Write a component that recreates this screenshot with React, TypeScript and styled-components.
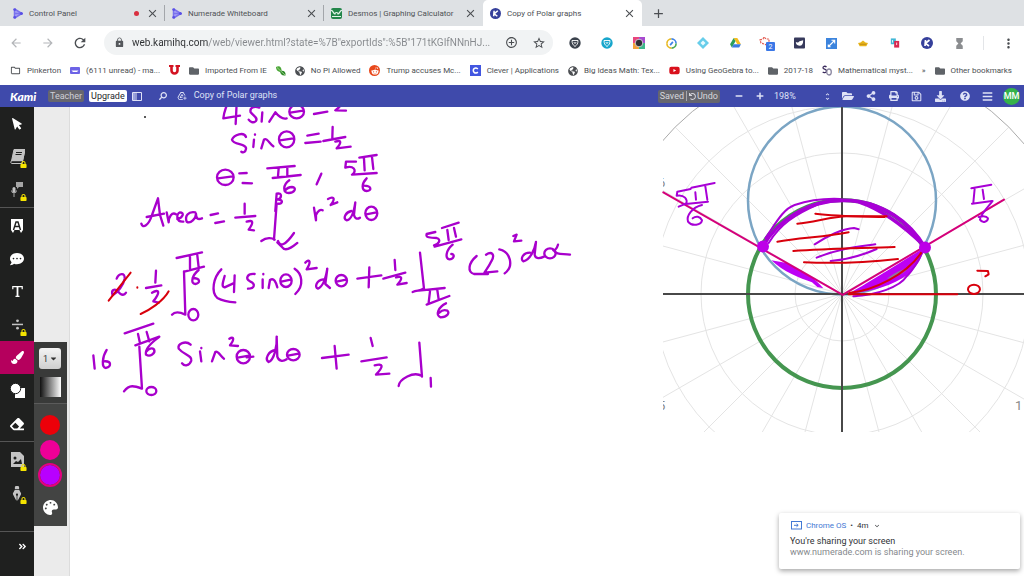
import React from 'react';
import styled, { createGlobalStyle, css } from 'styled-components';
import {
  FaFolder, FaFolderOpen, FaShareAlt, FaPrint, FaRegSave, FaDownload, FaQuestionCircle, FaBars,
  FaMinus, FaPlus, FaUndo, FaSearch, FaGlobeAmericas, FaRedditAlien, FaPaintBrush, FaEraser,
  FaMousePointer, FaCommentDots, FaLock, FaPalette, FaPenNib, FaAngleDoubleRight,
  FaCaretDown, FaYoutube,
} from 'react-icons/fa';
import {
  MdClose, MdAdd, MdArrowBack, MdArrowForward, MdRefresh, MdLock, MdAddCircleOutline, MdStarBorder,
  MdMoreVert, MdHourglassFull, MdOutlineFolder, MdExpandMore, MdAddToDrive, MdUnfoldMore,
} from 'react-icons/md';

const GlobalStyle = createGlobalStyle`
  *, *::before, *::after { box-sizing: border-box; }
  body { margin: 0; background: #fff; font-family: Roboto, "Liberation Sans", sans-serif; }
  button, input, select { font: inherit; color: inherit; margin: 0; padding: 0; border: 0; background: none; }
  a { color: inherit; text-decoration: none; }
  svg { display: block; flex: none; }
`;

const INK = '#a800cc';
const RED = '#d8000c';

const Screen = styled.div`
  display: flex;
  flex-direction: column;
  height: 100vh;
  overflow: hidden;
  position: relative;
`;

/* ---------- browser tabs ---------- */
const TabStrip = styled.nav`
  display: flex;
  flex: none;
  align-items: stretch;
  height: 26px;
  padding-left: 6px;
  background: #dee1e4;
`;
const Tab = styled.div<{ $active?: boolean; $divider?: boolean }>`
  display: flex;
  align-items: center;
  flex: 0 1 159px;
  min-width: 0;
  gap: 6px;
  padding: 0 6px 0 7px;
  font-size: 8px;
  color: #4e5155;
  background: linear-gradient(#a3a6aa, #a3a6aa) right center / ${p => (p.$divider ? 1 : 0)}px 16px no-repeat;
  ${p => p.$active && css`
    background: #fff;
    border-radius: 5px 5px 0 0;
  `}
`;
const TabTitle = styled.a`
  flex: 1;
  min-width: 0;
  white-space: nowrap;
`;
const TabDot = styled.span`
  width: 5px;
  height: 5px;
  border-radius: 50%;
  background: #d93040;
`;
const IconButton = styled.button<{ $w?: number; $dim?: boolean }>`
  display: flex;
  align-items: center;
  justify-content: center;
  flex: none;
  width: ${p => p.$w ?? 14}px;
  color: ${p => (p.$dim ? '#b4b6b9' : '#4b4e52')};
`;

/* ---------- address bar ---------- */
const AddressRow = styled.div`
  display: flex;
  flex: none;
  height: 34px;
  background: #fff;
`;
const Omnibox = styled.div`
  display: flex;
  flex: 1;
  align-items: center;
  height: 25px;
  margin: 4px 6px 5px 8px;
  padding: 0 3px 0 10px;
  gap: 7px;
  border-radius: 13px;
  background: #f1f3f4;
  color: #55585c;
`;
const UrlInput = styled.input`
  flex: 1;
  min-width: 0;
  margin-right: -7px;
  font-size: 10px;
  outline: none;
  color: transparent;
  background: linear-gradient(to right, #2b2d30 76px, #85888c 76px);
  background-clip: text;
  -webkit-background-clip: text;
`;
const ToolbarDivider = styled.span`
  width: 1px;
  height: 14px;
  margin: 10px 8px;
  background: #e3e5e8;
`;

/* ---------- bookmarks ---------- */
const BookmarkBar = styled.nav`
  display: flex;
  flex: none;
  align-items: center;
  height: 25px;
  padding: 0 16px 4px 10px;
  gap: 9px;
  background: #fff;
`;
const Bookmark = styled.a<{ $end?: boolean }>`
  display: flex;
  align-items: center;
  gap: 6px;
  font-size: 8px;
  line-height: 12px;
  white-space: nowrap;
  color: #4c4f53;
  margin-left: ${p => (p.$end ? 'auto' : '0')};
`;

/* ---------- kami header ---------- */
const AppBar = styled.header`
  display: flex;
  flex: none;
  align-items: center;
  height: 22px;
  padding: 0 4px 0 10px;
  background: #3f4aab;
  color: #dfe2f6;
  font-size: 9px;
`;
const Logo = styled.span`
  width: 38px;
  font-family: Lato, sans-serif;
  font-size: 12px;
  font-style: italic;
  font-weight: 900;
  color: #fff;
`;
const Badge = styled.button<{ $light?: boolean }>`
  height: 12px;
  margin-right: 5px;
  padding: 0 2px;
  border-radius: 2px;
  font-size: 9px;
  line-height: 12px;
  background: ${p => (p.$light ? '#fff' : '#66666e')};
  color: ${p => (p.$light ? '#26282c' : '#cfcfd6')};
`;
const BarButton = styled.button<{ $w: number; $gap?: number }>`
  display: flex;
  align-items: center;
  justify-content: center;
  flex: none;
  width: ${p => p.$w}px;
  height: 22px;
  margin-left: ${p => p.$gap ?? 0}px;
`;
const DocTitle = styled.h1`
  flex: 1;
  margin: 0 0 0 6px;
  font-size: 9px;
  font-weight: 400;
  line-height: 12px;
  padding-bottom: 2px;
  white-space: nowrap;
`;
const SaveState = styled.div`
  display: flex;
  align-items: center;
  gap: 2px;
  height: 13px;
  padding: 0 2px;
  margin-right: 9px;
  border-radius: 2px;
  background: #66666e;
  color: #d6d6dc;
`;
const UndoButton = styled.button`
  display: flex;
  align-items: center;
  gap: 1px;
  padding-left: 2px;
  border-left: 1px solid #a8a8ae;
  line-height: 10px;
`;
const ZoomBox = styled.label`
  display: grid;
  align-items: center;
  width: 62px;
  margin-right: 4px;
  > * { grid-area: 1 / 1; }
  svg { justify-self: end; pointer-events: none; }
`;
const PlainSelect = styled.select`
  appearance: none;
  width: 100%;
  padding-left: 4px;
  font-size: 9px;
  outline: none;
`;
const Avatar = styled.button`
  width: 17px;
  height: 17px;
  margin-left: 4px;
  border-radius: 50%;
  background: #35b24a;
  color: #fff;
  font-size: 9px;
  font-weight: 500;
  line-height: 17px;
`;

/* ---------- workspace ---------- */
const Workspace = styled.div`
  display: flex;
  flex: 1;
  min-height: 0;
`;
const ToolRail = styled.nav`
  display: flex;
  flex: none;
  flex-direction: column;
  width: 34px;
  background: #1f201f;
`;
const ToolGroup = styled.div<{ $last?: boolean }>`
  display: flex;
  flex-direction: column;
  padding-bottom: ${p => (p.$last ? 22 : 1)}px;
  margin-bottom: 1px;
  border-bottom: 1px solid #555;
`;
const Tool = styled.button<{ $active?: boolean; $muted?: boolean }>`
  display: grid;
  place-items: center;
  width: 100%;
  height: 33px;
  color: ${p => (p.$muted ? '#c3c3c3' : '#fff')};
  background: ${p => (p.$active ? '#b5005d' : 'transparent')};
  > * { grid-area: 1 / 1; }
`;
const ToolMore = styled(Tool)`
  height: 26px;
  padding-left: 10px;
`;
const Lock = styled(FaLock)`
  color: #f5e400;
  margin: 16px 0 0 12px;
`;
const Gutter = styled.aside`
  display: flex;
  flex: none;
  flex-direction: column;
  align-items: flex-start;
  width: 36px;
  padding-top: 235px;
  background: #ebebeb;
  border-right: 1px solid #dcdcdc;
`;
const OptionPanel = styled.div`
  display: flex;
  flex-direction: column;
  width: 33px;
  background: #434443;
`;
const PanelPart = styled.div<{ $top?: boolean }>`
  display: flex;
  flex-direction: column;
  align-items: center;
  gap: ${p => (p.$top ? 8 : 1)}px;
  padding: ${p => (p.$top ? '6px 1px 6px 0' : '9px 1px 11px 0')};
  background: ${p => (p.$top ? '#393a39' : 'transparent')};
  border-bottom: ${p => (p.$top ? '1px solid #5b5b5b' : '0')};
`;
const SizeBox = styled.label`
  display: grid;
  align-items: center;
  width: 22px;
  height: 21px;
  border-radius: 3px;
  background: linear-gradient(#f4f4f4, #cfcfcf);
  color: #333;
  > * { grid-area: 1 / 1; }
  svg { justify-self: end; margin-right: 3px; pointer-events: none; }
`;
const OpacityButton = styled.button`
  width: 21px;
  height: 20px;
  background: linear-gradient(to right, #111, #fff);
`;
const Swatch = styled.input<{ $color: string }>`
  appearance: none;
  width: 24px;
  height: 24px;
  border: 2px solid transparent;
  border-radius: 50%;
  background: ${p => p.$color} padding-box;
  &:checked { border-color: #e5007e; }
`;
const PaletteButton = styled.button`
  margin-top: 12px;
  color: #fff;
`;
const PaperArea = styled.main`
  flex: 1;
  min-width: 0;
  overflow: hidden;
  background: #fff;
  > svg { width: 100%; height: auto; }
`;

/* ---------- notification ---------- */
const Toast = styled.section`
  position: absolute;
  right: 4px;
  bottom: 7px;
  width: 241px;
  padding: 7px 11px 11px;
  border-radius: 2px;
  background: #fff;
  box-shadow: 0 2px 5px rgba(0, 0, 0, 0.35);
  font-size: 9px;
  line-height: 11px;
  color: #303236;
`;
const ToastHead = styled.div`
  display: flex;
  align-items: center;
  gap: 4px;
  margin: 0 0 5px 1px;
  font-size: 8px;
`;
const ToastSource = styled.span`
  color: #4479d4;
`;
const ToastText = styled.p<{ $soft?: boolean }>`
  margin: 0;
  color: ${p => (p.$soft ? '#85888c' : '#303236')};
`;

/* ---------- small drawings ---------- */
const NumeradeIcon = () => (
  <svg width="10" height="11" viewBox="0 0 10 11">
    <path d="M1.5 1v9M1.5 1l7.5 4.5L1.5 10M1.5 5.5H9" stroke="#7a72ec" strokeWidth="1.5" fill="#a9a4f4" />
    <circle cx="1.7" cy="1.6" r="1.4" fill="#5a50e6" /><circle cx="1.7" cy="9.4" r="1.4" fill="#5a50e6" /><circle cx="8.4" cy="5.5" r="1.5" fill="#5a50e6" />
  </svg>
);
const DesmosIcon = () => (
  <svg width="11" height="11" viewBox="0 0 11 11">
    <rect width="11" height="11" rx="2" fill="#23864a" />
    <path d="M0 2.500C2 2 2.500 6 4 6c0-2 3-2 3 0C8.500 6 9 2 11 2.500M1 8.500h9" stroke="#e4f5e9" strokeWidth="1.200" fill="none" />
  </svg>
);
const KamiIcon = ({ size = 11 }: { size?: number }) => (
  <svg width={size} height={size} viewBox="0 0 12 12">
    <circle cx="6" cy="6" r="6" fill="#36409b" />
    <path d="M4.500 3L4 9M8.500 3L4.500 6.300 8 9" stroke="#fff" strokeWidth="1.700" fill="none" />
  </svg>
);
const ShieldIcon = ({ color }: { color: string }) => (
  <svg width="12" height="12" viewBox="0 0 12 12">
    <circle cx="6" cy="6" r="5.700" fill={color} />
    <path d="M3 3.500h6c0 3-1 4.500-3 6-2-1.500-3-3-3-6z" fill="none" stroke="#fff" strokeWidth=".9" />
    <path d="M4.800 5L6 6.600 7.200 5" fill="none" stroke="#fff" strokeWidth=".9" />
  </svg>
);
const CameraIcon = () => (
  <svg width="12" height="12" viewBox="0 0 12 12">
    <rect width="6" height="6" fill="#e8457c" /><rect x="6" width="6" height="6" fill="#a84ad0" />
    <rect y="6" width="6" height="6" fill="#f2a23a" /><rect x="6" y="6" width="6" height="6" fill="#3db889" />
    <circle cx="6" cy="6" r="3.800" fill="#2e3034" stroke="#e9e4ee" strokeWidth=".8" />
  </svg>
);
const RingIcon = () => (
  <svg width="11" height="11" viewBox="0 0 12 12" fill="none" strokeWidth="1.800">
    <path d="M1 6a5 5 0 0 1 5-5" stroke="#e8b922" /><path d="M6 1a5 5 0 0 1 5 5" stroke="#3d82e8" />
    <path d="M11 6a5 5 0 0 1-5 5" stroke="#49a857" /><path d="M6 11a5 5 0 0 1-5-5" stroke="#e8b922" />
    <path d="M4.500 7.800l3-3.600" stroke="#3d82e8" />
  </svg>
);
const DiamondIcon = () => (
  <svg width="12" height="12" viewBox="0 0 12 12">
    <path d="M6 0l6 6-6 6-6-6z" fill="#67cdea" /><path d="M6 3.500L8.500 6 6 8.500 3.500 6z" fill="#e8fbff" />
  </svg>
);
const DriveIcon = () => (
  <svg width="11" height="10" viewBox="0 0 12 11">
    <path d="M4 0h4l4 7H8z" fill="#f5bd20" /><path d="M4 0L0 7l2 3.500 4-7z" fill="#2b9f5b" /><path d="M4 7h8l-2 3.500H2z" fill="#3b7be0" />
  </svg>
);
const PuzzleIcon = () => (
  <svg width="16" height="15" viewBox="0 0 16 15">
    <path d="M1 4l3-1 1-2 2 2h3v3l-2 3-3-1-3-1z" fill="none" stroke="#e2574c" strokeWidth="1.200" strokeDasharray="2 1" />
    <rect x="7" y="6" width="9" height="9" rx="1" fill="#3b78e7" />
    <text x="11.500" y="13" fontSize="7" fill="#fff" textAnchor="middle">2</text>
  </svg>
);
const NightIcon = () => (
  <svg width="11" height="12" viewBox="0 0 12 12">
    <rect width="12" height="12" rx="1" fill="#373a5c" />
    <path d="M2 5c2 1 3 0 4-1l4-1c0 4-1 6-4 6S2 7 2 5z" fill="#fff" />
  </svg>
);
const ExpandIcon = () => (
  <svg width="11" height="11" viewBox="0 0 12 12">
    <rect width="12" height="12" fill="#3c84dd" />
    <path d="M3 9l6-6M6 2.500h3.500V6M2.500 7v2.500H5" stroke="#fff" strokeWidth="1.200" fill="none" />
  </svg>
);
const CrownIcon = () => (
  <svg width="10" height="10" viewBox="0 0 12 12">
    <path d="M0 6l3-.5L6 3l3 2.500 3 .5-2 4H2z" fill="#e8b51c" /><path d="M2 7.500h8" stroke="#b88312" />
  </svg>
);
const CardsIcon = () => (
  <svg width="10" height="12" viewBox="0 0 12 13">
    <rect x="1" y="1" width="6" height="7" fill="#42b7d6" /><rect x="5" y="4" width="6" height="8" fill="#d9284f" />
    <path d="M3 3v3M8 6v3" stroke="#fff" />
  </svg>
);
const MailIcon = () => (
  <svg width="10" height="8" viewBox="0 0 10 8">
    <rect width="10" height="7" rx="1" fill="#6d63e6" /><path d="M1.500 3.500h7L7 5H3z" fill="#fff" />
  </svg>
);
const MagnetIcon = () => (
  <svg width="11" height="11" viewBox="0 0 11 11">
    <path d="M2.500 0v5.500a3 3 0 0 0 6 0V0M0 .8h4.500M6.500 .8H11" stroke="#d31322" strokeWidth="2.600" fill="none" />
  </svg>
);
const LeafIcon = () => (
  <svg width="10" height="10" viewBox="0 0 10 10">
    <path d="M0 1c4-2 6 1 5.500 5C2 6 0 4 0 1z" fill="#4aa637" /><path d="M4 5c4-1 6 1 5.500 4.500C6 10 4 8 4 5z" fill="#2f8a2a" />
    <path d="M1 1.500L9 9" stroke="#bfe3a9" strokeWidth=".7" />
  </svg>
);
const CleverIcon = () => (
  <svg width="11" height="11" viewBox="0 0 11 11">
    <rect width="11" height="11" fill="#4256e0" />
    <path d="M7.800 4A2.500 2.500 0 1 0 7.800 7" stroke="#fff" strokeWidth="1.500" fill="none" />
  </svg>
);
const RedditIcon = styled.span`
  display: grid;
  place-items: center;
  width: 11px;
  height: 11px;
  border-radius: 50%;
  background: #e8481c;
  color: #fff;
`;
const LoopsIcon = () => (
  <svg width="10" height="11" viewBox="0 0 10 11" fill="none" strokeWidth="1.300">
    <path d="M4.500 2C3 .5 .8 1.500 1 3s3.500 1 3.500 3S1.500 8 .8 6.800" stroke="#3a2a5c" />
    <ellipse cx="7" cy="7" rx="2.300" ry="3" stroke="#8a86a0" />
  </svg>
);
const SplitIcon = () => (
  <svg width="10" height="9" viewBox="0 0 10 9">
    <path d="M.5 .5h9v8h-9zM4 .5v8" stroke="#dfe2f6" fill="none" /><path d="M1 1h2v7H1z" fill="#9aa2de" />
  </svg>
);
const CastIcon = () => (
  <svg width="11" height="9" viewBox="0 0 11 9" fill="none" stroke="#4479d4">
    <rect x=".5" y=".5" width="10" height="7.500" /><path d="M3 4.300h4M5.500 2.800L7.200 4.300 5.500 5.800" />
  </svg>
);
const BookIcon = () => (
  <svg width="15" height="15" viewBox="0 0 15 15">
    <path d="M4 .5h11L12.500 12H1.500z" fill="#c3c3c3" stroke="#c3c3c3" strokeLinejoin="round" />
    <path d="M1.500 12c-1.500 1-.5 2.500.5 2.500h10L14.500 3" fill="none" stroke="#c3c3c3" />
    <path d="M2 12.800h10" stroke="#1f201f" strokeWidth=".8" />
    <path d="M6 3.500h6M5.500 5.500h6" stroke="#1f201f" />
  </svg>
);
const MarkupIcon = () => (
  <svg width="12" height="14" viewBox="0 0 12 14">
    <path d="M0 0h12v11l-2 3-1.500-3h-5L2 14l-2-3z" fill="#fff" />
    <path d="M2.500 11L5 3h2l2.500 8M4 7.500h4" stroke="#1f201f" strokeWidth="1.400" fill="none" />
  </svg>
);
const SerifTIcon = () => (
  <svg width="11" height="11" viewBox="0 0 11 11" fill="none" stroke="#fff">
    <path d="M5.500 .8v9.500" strokeWidth="1.800" /><path d="M.8 3.300V.7h9.400v2.600M3.500 10.300h4" strokeWidth="1.200" />
  </svg>
);
const DivideIcon = () => (
  <svg width="11" height="11" viewBox="0 0 11 11" fill="#c3c3c3">
    <rect y="4.700" width="11" height="1.500" /><circle cx="5.500" cy="1.800" r="1.400" /><circle cx="5.500" cy="9.200" r="1.400" />
  </svg>
);
const ShapesIcon = () => (
  <svg width="15" height="15" viewBox="0 0 15 15">
    <rect x="5" y="5" width="10" height="10" fill="#fff" /><circle cx="5.500" cy="5.500" r="5.200" fill="#fff" stroke="#1f201f" />
  </svg>
);
const PictureIcon = () => (
  <svg width="13" height="15" viewBox="0 0 13 15">
    <path d="M0 0h9l4 4v11H0z" fill="#c3c3c3" />
    <circle cx="4" cy="6" r="1.500" fill="#1f201f" /><path d="M2 12l3-3 2 1 3-3 1 5z" fill="#1f201f" />
  </svg>
);
const VoiceIcon = () => (
  <svg width="12" height="16" viewBox="0 0 12 16" fill="#c3c3c3">
    <rect x="1.500" y="5" width="3" height="6" rx="1.500" /><path d="M.5 8.500a2.500 2.500 0 0 0 5 0M3 11.500V15" stroke="#a5a5a5" fill="none" />
    <path d="M5 0h7v5H8L6 7V5H5z" fill="#a5a5a5" />
  </svg>
);

/* ---------- page content: graph and pen strokes ---------- */
type InkLayer = { x: number; y: number; color: string; width: number; strokes: string[] };

const ring = (cx: number, cy: number, rx: number, ry: number) =>
  `M${cx - rx} ${cy}a${rx} ${ry} 0 1 0 ${2 * rx} 0a${rx} ${ry} 0 1 0 ${-2 * rx} 0`;
const theta = (cx: number, cy: number, rx: number, ry: number) =>
  `${ring(cx, cy, rx, ry)}M${cx - rx + 3} ${cy + 3}L${cx + rx - 3} ${cy - 3}`;

const inkLayers: InkLayer[] = [
  {
    x: 100, y: 105, color: INK, width: 7,
    strokes: [
      'M382-5C378 10 372 20 370 40L420 32M410-5L407 57',
      'M478 8C462 2 448 8 452 22C462 34 474 38 468 48C460 56 450 50 446 44',
      'M487 22L485 50M508 50L526 22C534 32 544 44 560 40', theta(590, 20, 22, 20),
      'M642 27L682 20M706 16L738 17M706 16L718 6',
      'M438 96C432 80 402 88 396 104C400 120 442 116 438 132C436 142 430 144 424 140',
      'M462 104L460 126M465 88v1M484 130L492 104C500 96 510 118 520 124', theta(560, 103, 23, 24),
      'M622 92L656 86M616 114L662 110M698 66L697 100M670 108L736 96',
      'M706 110C724 104 726 112 710 130L752 125',
      theta(376, 217, 25, 23), 'M418 205L440 204M428 234L456 235',
      'M502 190L584 183M536 190L534 214M562 188L562 212M518 219L602 210',
      'M568 226C548 240 548 264 566 264C584 264 592 248 576 246C566 246 560 250 554 258',
      'M664 206L650 238',
      'M768 170L738 170L736 188C760 180 772 196 758 208M756 209L830 204M778 158L830 150M792 160L794 196M816 156L820 192',
      'M800 220C784 236 784 256 800 258C816 258 816 242 792 242',
      'M124 356C128 372 146 362 156 330L174 280L180 330L190 362M140 336L192 326',
      'M200 322L206 352C206 336 216 320 228 328',
      'M232 342C250 338 254 322 240 322C228 326 228 352 250 350',
      'M286 322C264 318 254 334 260 350C272 358 288 340 288 326C288 344 296 344 306 340',
      'M332 330L354 325M346 354L372 349M434 296L434 326M406 338L466 333',
      'M440 350C460 344 462 352 446 374L462 376',
      'M526 318L530 266C548 262 546 280 532 284C550 282 550 298 534 296M530 296L522 404M484 408C500 396 516 398 524 404',
      'M534 408C540 426 556 422 582 384M532 412L552 432C566 436 580 424 592 414',
      'M642 308L648 346L648 330C654 316 662 312 668 316M684 282C704 272 706 282 692 300L712 292',
      'M754 318C736 322 728 340 740 346C756 344 762 320 766 292L762 330C766 344 774 342 780 338',
      theta(814, 325, 18, 20),
    ],
  },
  {
    x: 90, y: 220, color: INK, width: 7,
    strokes: [
      'M80 176C86 160 106 156 104 176C100 196 84 216 68 226C62 210 74 204 84 214C96 230 104 224 108 218',
      'M198 152L196 188M168 204L214 196M186 218C208 206 212 216 190 244L206 248',
      'M260 114L336 97M300 110L300 146M322 106L326 142M286 154L342 140',
      'M326 150C306 166 300 192 316 192C332 190 332 174 308 174',
      'M282 154L286 284M246 284C256 272 270 276 286 284', ring(310, 284, 15, 17),
      'M394 148C370 172 362 216 382 234C400 244 420 246 436 247',
      'M404 168C398 190 394 200 404 202L430 190M434 166L432 216',
      'M494 162C470 160 466 176 480 184C498 192 494 206 474 206',
      'M518 178L518 204M520 162v1M536 204L540 180C552 172 558 186 562 202', theta(588, 182, 17, 19),
      'M614 146C636 160 644 196 616 222M646 128C660 114 664 126 650 148L680 144',
      'M700 178C680 180 672 202 684 206C700 200 708 170 712 146L706 192L720 204', theta(754, 182, 17, 17),
      'M10 406L14 446M50 390C36 412 34 444 48 444C64 440 66 422 42 424',
      'M104 340L190 311M144 342L150 370M170 336L178 364M136 376L208 350',
      'M206 352C184 368 164 388 168 404C180 412 198 400 192 388C186 382 176 386 170 394',
      'M148 380L156 506M102 514C118 492 134 498 156 506', ring(184, 513, 15, 12),
      'M302 374C286 360 262 372 266 386C280 404 308 406 304 422C298 438 284 440 276 430',
      'M330 394L334 424M334 384v1M366 424L376 396C384 390 392 410 402 416',
      'M418 356C432 348 434 358 420 376L444 378', theta(460, 410, 20, 20), 'M470 412L490 410',
      'M556 390C534 394 524 418 536 426C552 420 562 380 560 350L562 410C566 424 578 426 590 418',
      theta(610, 404, 19, 17), 'M734 378L740 446M696 414L776 404',
    ],
  },
  {
    x: 340, y: 210, color: INK, width: 7,
    strokes: [
      'M88 172L86 232M52 206L124 196M164 150L166 180M130 206L196 188',
      'M168 202C188 196 188 206 172 224L200 219',
      'M240 128L252 236M218 246C232 240 240 244 250 236M236 242L314 234M270 244L266 278M292 240L296 268M260 284L328 258',
      'M318 280C296 290 284 316 302 322C322 322 330 308 322 302C312 298 304 302 298 308',
      'M286 66L260 72C256 82 270 84 290 84C304 88 298 102 282 106M284 110L364 88M306 54L356 38M322 60L326 90M342 54L348 80',
      'M338 104C318 120 314 146 328 148C342 148 346 132 334 132',
      'M410 138C384 160 382 186 402 192L444 192',
      'M438 134C456 122 466 134 454 154C446 172 430 190 434 188L472 184',
      'M478 118C510 124 524 168 494 190M520 78L530 74L522 94L544 92',
      'M570 128C548 128 540 148 550 154C570 150 584 120 588 96L584 134C586 148 600 146 612 140',
      ring(630, 130, 17, 15), 'M654 104C650 120 640 124 640 120C650 136 668 130 690 134',
      'M92 384L98 408M64 454L140 442M104 466C130 460 132 468 108 494L148 491',
      'M238 398L246 500M176 528C178 508 220 482 246 498M272 504L273 530',
    ],
  },
  { x: 90, y: 220, color: RED, width: 6, strokes: ['M122 158L56 242', 'M152 282C176 272 220 244 236 214', 'M142 202v1'] },
  { x: 660, y: 105, color: '#d4007a', width: 6, strokes: ['M10 262L548 570L1032 284'] },
  {
    x: 660, y: 105, color: '#a800d6', width: 6,
    strokes: [
      'M92 252L52 260L50 272C74 268 84 284 78 296L56 305M94 248L164 234M106 262L108 284M136 244L142 284M70 298L144 290',
      'M126 300C96 308 78 332 84 350C96 366 124 360 126 346C120 334 108 332 98 340',
      'M934 250L994 239M944 252L940 294M968 254L972 282M936 296L996 288',
      'M998 288C984 306 960 330 960 344C968 356 984 350 984 340C978 330 966 334 956 336',
      'M316 400C350 350 370 312 404 300C440 288 490 280 540 282', 'M326 414C360 360 400 330 480 296',
      'M464 418C500 394 550 370 582 369L596 373', 'M470 458C540 430 590 426 646 418',
      'M512 468C560 464 610 450 650 432', 'M580 574C650 570 720 546 740 514C756 500 780 460 788 440',
    ],
  },
  { x: 660, y: 105, color: '#a800d6', width: 11, strokes: ['M308 424A282 282 0 0 1 795 428', 'M600 292C670 316 730 362 790 420'] },
  {
    x: 660, y: 105, color: RED, width: 6,
    strokes: [
      'M466 326C530 334 600 334 674 336', 'M412 356C460 352 520 334 560 334L680 334',
      'M352 410C420 398 500 396 566 382', 'M400 438C500 432 600 430 704 426', 'M432 472C520 476 640 470 714 462',
      'M566 568L892 568', 'M568 564C640 556 740 510 786 440', ring(942, 553, 18, 14), 'M952 497L984 498L986 508L976 514',
    ],
  },
];

const spokes = Array.from({ length: 24 }, (_, i) => (i * Math.PI) / 12);

const Paper = () => (
  <svg viewBox="70 107 954 469" role="img" aria-label="Polar graph with handwritten area calculation">
    <clipPath id="plot"><rect x="663" y="107" width="361" height="325" /></clipPath>
    <g clipPath="url(#plot)" fill="none">
      <g stroke="#e4e4e4">
        {[47, 94, 141, 188].map(r => <circle key={r} cx="842" cy="294" r={r} />)}
        {spokes.map(a => (
          <line key={a} x1="842" y1="294" x2={842 + 235 * Math.cos(a)} y2={294 + 235 * Math.sin(a)} />
        ))}
      </g>
      <circle cx="842" cy="294" r="236" stroke="#aaa" />
      <circle cx="842" cy="200.500" r="94" stroke="#7ba5c4" strokeWidth="2.500" />
      <circle cx="842" cy="294" r="94" stroke="#459650" strokeWidth="4" />
      <path d="M842 107V432M662 294H1024" stroke="#484848" strokeWidth="2" />
      <g fill="#888" fontSize="13">
        <text x="658" y="187">6</text>
        <text x="658" y="410">5</text>
        <text x="1015" y="410">1</text>
      </g>
    </g>
    <g transform="translate(660 105) scale(.3333)" fill="#bd00f5">
      <path d="M566 566C620 536 710 480 792 428C784 470 764 490 742 510C700 540 640 560 566 566z" />
      <path d="M334 466L380 474C430 498 466 520 490 550L472 546L456 532C420 520 370 500 334 466z" />
      <path d="M680 522C700 506 724 494 742 490C736 506 710 514 680 522z" fill="#8c7c9c" />
    </g>
    {inkLayers.map((layer, i) => (
      <g
        key={i}
        transform={`translate(${layer.x} ${layer.y}) scale(.3333)`}
        stroke={layer.color}
        strokeWidth={layer.width}
        strokeLinecap="round"
        strokeLinejoin="round"
        fill="none"
      >
        {layer.strokes.map(d => <path key={d} d={d} />)}
      </g>
    ))}
    <circle cx="763" cy="246.500" r="6" fill="#bd00e8" />
    <circle cx="925" cy="247.500" r="6" fill="#bd00e8" />
    <circle cx="145" cy="117" r="1" fill="#222" />
  </svg>
);

const extensions: [string, React.ReactNode][] = [
  ['Shield', <ShieldIcon color="#3c434d" />],
  ['Shield sync', <ShieldIcon color="#18a6cc" />],
  ['Camera', <CameraIcon />],
  ['Ring', <RingIcon />],
  ['Diamond', <DiamondIcon />],
  ['Drive', <DriveIcon />],
  ['Puzzle', <PuzzleIcon />],
  ['Night', <NightIcon />],
  ['Expand', <ExpandIcon />],
  ['Crown', <CrownIcon />],
  ['Cards', <CardsIcon />],
  ['Kami', <KamiIcon size={12} />],
  ['Timer', <MdHourglassFull size={13} color="#8b8d90" />],
];

const bookmarks: [React.ReactNode, string][] = [
  [<MdOutlineFolder size={11} />, 'Pinkerton'],
  [<MailIcon />, '(6111 unread) - ma...'],
  [<MagnetIcon />, ''],
  [<FaFolder size={10} color="#5f6368" />, 'Imported From IE'],
  [<LeafIcon />, ''],
  [<FaGlobeAmericas size={10} />, 'No Pi Allowed'],
  [<RedditIcon><FaRedditAlien size={8} /></RedditIcon>, 'Trump accuses Mc...'],
  [<CleverIcon />, 'Clever | Applications'],
  [<FaGlobeAmericas size={10} />, 'Big Ideas Math: Tex...'],
  [<FaYoutube size={11} color="#d9101c" />, 'Using GeoGebra to...'],
  [<FaFolder size={10} color="#5f6368" />, '2017-18'],
  [<LoopsIcon />, 'Mathematical myst...'],
];

const tabs = [
  { icon: <NumeradeIcon />, title: 'Control Panel', live: true, divider: true },
  { icon: <NumeradeIcon />, title: 'Numerade Whiteboard', divider: true },
  { icon: <DesmosIcon />, title: 'Desmos | Graphing Calculator' },
  { icon: <KamiIcon />, title: 'Copy of Polar graphs', active: true },
];

export default function App() {
  return (
    <Screen>
      <GlobalStyle />
      <TabStrip aria-label="Tabs">
        {tabs.map(t => (
          <Tab key={t.title} $active={t.active} $divider={t.divider}>
            {t.icon}
            <TabTitle href="#">{t.title}</TabTitle>
            {t.live && <TabDot />}
            <IconButton aria-label={`Close ${t.title}`}><MdClose size={13} /></IconButton>
          </Tab>
        ))}
        <IconButton $w={32} aria-label="New tab"><MdAdd size={15} /></IconButton>
      </TabStrip>

      <AddressRow>
        <IconButton $w={32} $dim aria-label="Back"><MdArrowBack size={14} /></IconButton>
        <IconButton $w={32} $dim aria-label="Forward"><MdArrowForward size={14} /></IconButton>
        <IconButton $w={32} aria-label="Reload"><MdRefresh size={16} /></IconButton>
        <Omnibox>
          <MdLock size={11} />
          <UrlInput
            aria-label="Address"
            defaultValue={'web.kamihq.com/web/viewer.html?state=%7B"exportIds":%5B"171tKGIfNNnHJ...'}
          />
          <IconButton $w={20} aria-label="Install"><MdAddCircleOutline size={13} /></IconButton>
          <IconButton $w={22} aria-label="Bookmark"><MdStarBorder size={14} /></IconButton>
        </Omnibox>
        {extensions.map(([name, icon]) => (
          <IconButton key={name} $w={32} aria-label={name}>{icon}</IconButton>
        ))}
        <ToolbarDivider />
        <IconButton $w={32} aria-label="Menu"><MdMoreVert size={15} /></IconButton>
      </AddressRow>

      <BookmarkBar aria-label="Bookmarks">
        {bookmarks.map(([icon, label], i) => (
          <Bookmark key={i} href="#" aria-label={label || 'Bookmark'}>{icon}{label}</Bookmark>
        ))}
        <Bookmark href="#" $end>»</Bookmark>
        <Bookmark href="#"><FaFolder size={10} color="#5f6368" />Other bookmarks</Bookmark>
      </BookmarkBar>

      <AppBar>
        <Logo>Kami</Logo>
        <Badge>Teacher</Badge>
        <Badge $light>Upgrade</Badge>
        <BarButton $w={10} aria-label="Split view"><SplitIcon /></BarButton>
        <BarButton $w={26} $gap={8} aria-label="Search"><FaSearch size={8} transform="scale(-1 1)" /></BarButton>
        <BarButton $w={12} aria-label="Drive"><MdAddToDrive size={10} /></BarButton>
        <DocTitle>Copy of Polar graphs</DocTitle>
        <SaveState>Saved<UndoButton><FaUndo size={7} />Undo</UndoButton></SaveState>
        <BarButton $w={20} aria-label="Zoom out"><FaMinus size={8} /></BarButton>
        <BarButton $w={21} aria-label="Zoom in"><FaPlus size={8} /></BarButton>
        <ZoomBox>
          <PlainSelect aria-label="Zoom level"><option>198%</option></PlainSelect>
          <MdUnfoldMore size={9} />
        </ZoomBox>
        <BarButton $w={23} aria-label="Open"><FaFolderOpen size={12} /></BarButton>
        <BarButton $w={23} aria-label="Share"><FaShareAlt size={10} /></BarButton>
        <BarButton $w={23} aria-label="Print"><FaPrint size={10} /></BarButton>
        <BarButton $w={23} aria-label="Save"><FaRegSave size={11} /></BarButton>
        <BarButton $w={25} aria-label="Download"><FaDownload size={11} /></BarButton>
        <BarButton $w={23} aria-label="Help"><FaQuestionCircle size={10} /></BarButton>
        <BarButton $w={23} aria-label="Menu"><FaBars size={11} /></BarButton>
        <Avatar>MM</Avatar>
      </AppBar>

      <Workspace>
        <ToolRail aria-label="Tools">
          <ToolGroup>
            <Tool aria-label="Select"><FaMousePointer size={13} transform="rotate(-14)" /></Tool>
            <Tool $muted aria-label="Dictionary"><BookIcon /><Lock size={7} /></Tool>
            <Tool $muted aria-label="Read aloud"><VoiceIcon /><Lock size={7} /></Tool>
          </ToolGroup>
          <ToolGroup>
            <Tool aria-label="Markup"><MarkupIcon /></Tool>
            <Tool aria-label="Comment"><FaCommentDots size={14} /></Tool>
            <Tool aria-label="Text box"><SerifTIcon /></Tool>
            <Tool $muted aria-label="Equation"><DivideIcon /><Lock size={7} /></Tool>
            <Tool $active aria-label="Drawing"><FaPaintBrush size={13} /></Tool>
            <Tool aria-label="Shapes"><ShapesIcon /></Tool>
            <Tool aria-label="Eraser"><FaEraser size={14} /></Tool>
          </ToolGroup>
          <ToolGroup $last>
            <Tool $muted aria-label="Picture"><PictureIcon /><Lock size={7} /></Tool>
            <Tool $muted aria-label="Signature"><FaPenNib size={12} transform="rotate(-45)" /><Lock size={7} /></Tool>
          </ToolGroup>
          <ToolMore aria-label="More"><FaAngleDoubleRight size={9} /></ToolMore>
        </ToolRail>
        <Gutter>
          <OptionPanel>
            <PanelPart $top>
              <SizeBox>
                <PlainSelect aria-label="Pen size"><option>1</option></PlainSelect>
                <FaCaretDown size={9} />
              </SizeBox>
              <OpacityButton aria-label="Opacity" />
            </PanelPart>
            <PanelPart>
              <Swatch type="radio" name="ink" aria-label="Red" $color="#ec0009" />
              <Swatch type="radio" name="ink" aria-label="Pink" $color="#ee0097" />
              <Swatch type="radio" name="ink" aria-label="Purple" $color="#b800ff" defaultChecked />
              <PaletteButton aria-label="More colors"><FaPalette size={15} /></PaletteButton>
            </PanelPart>
          </OptionPanel>
        </Gutter>
        <PaperArea><Paper /></PaperArea>
      </Workspace>

      <Toast role="status">
        <ToastHead>
          <CastIcon />
          <ToastSource>Chrome OS</ToastSource>
          <span>•</span>
          <span>4m</span>
          <MdExpandMore size={8} />
        </ToastHead>
        <ToastText>You're sharing your screen</ToastText>
        <ToastText $soft>www.numerade.com is sharing your screen.</ToastText>
      </Toast>
    </Screen>
  );
}
